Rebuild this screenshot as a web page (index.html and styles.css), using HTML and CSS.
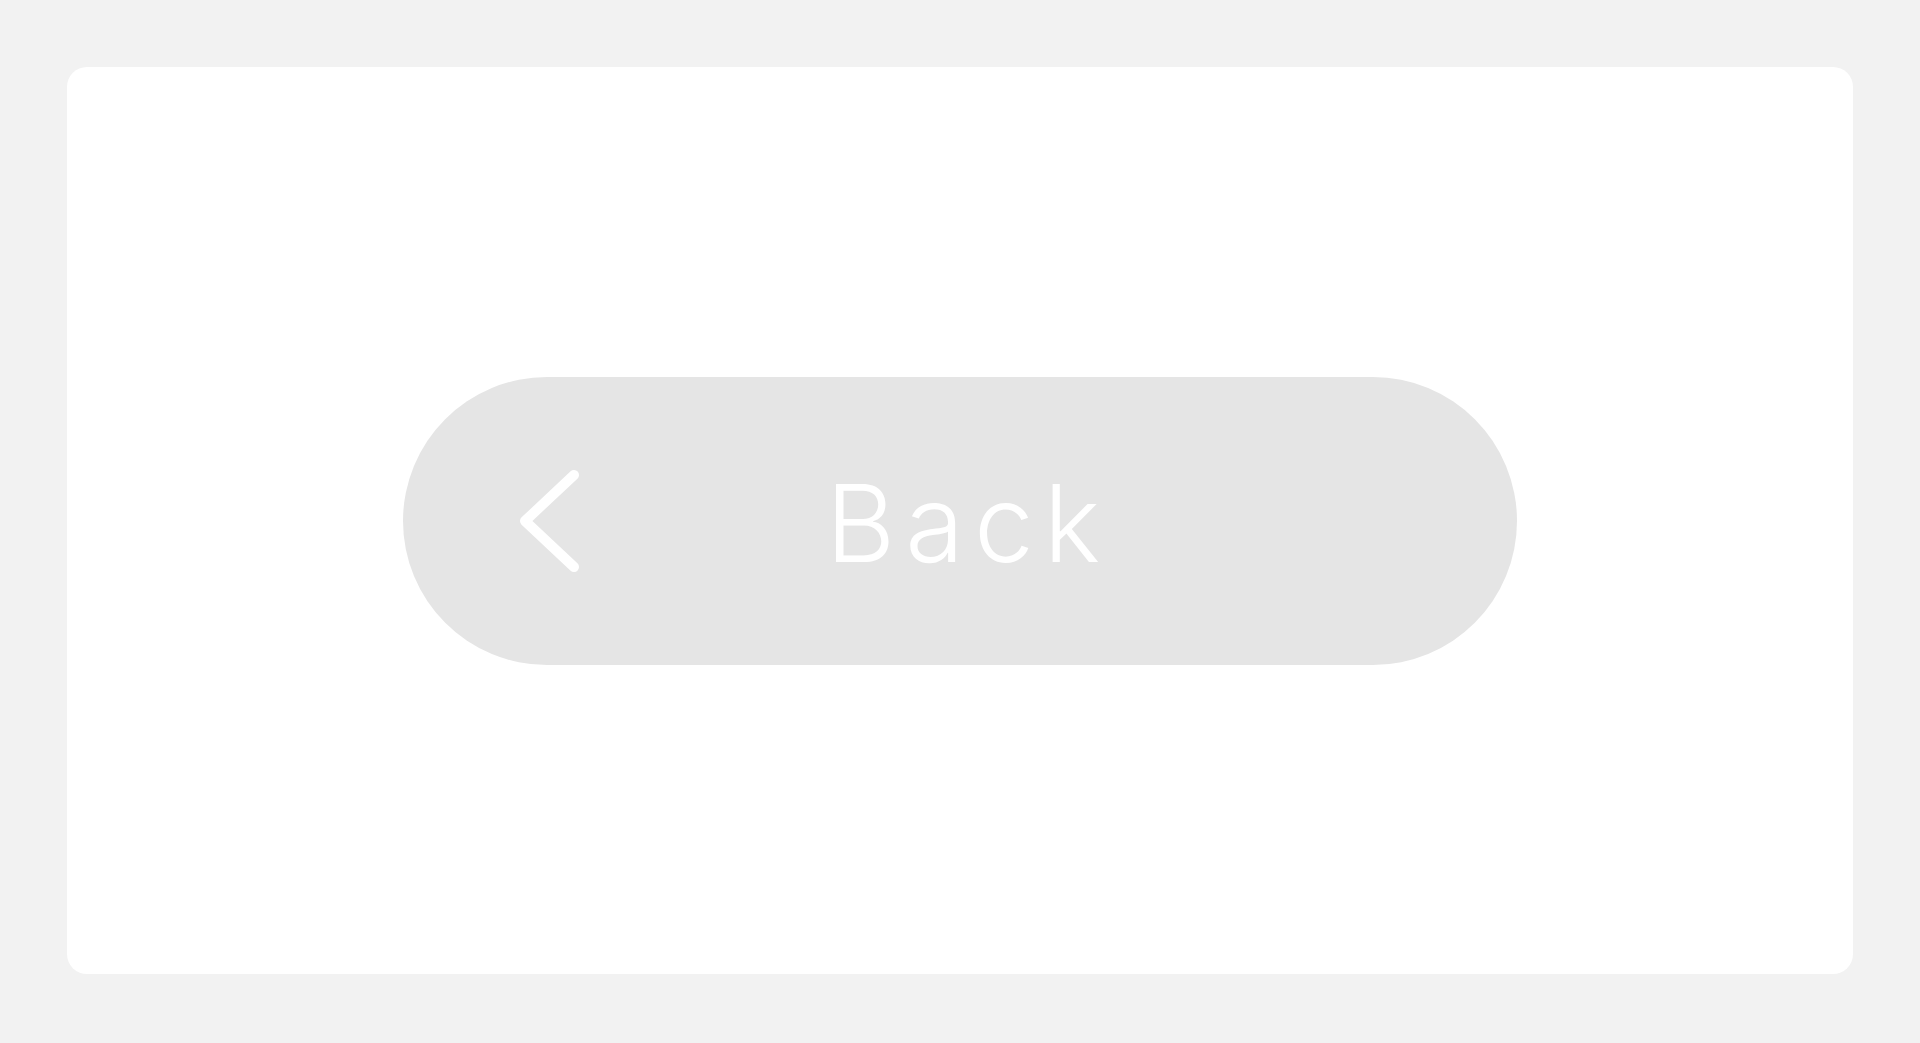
FILE: index.html
```html
<!DOCTYPE html>
<html lang="en">
<head>
  <meta charset="UTF-8">
  <meta name="viewport" content="width=device-width, initial-scale=1.0">
  <title>Back</title>
  <link rel="stylesheet" href="styles.css">
</head>
<body>
  <div class='card'>
    <!-- 返回按钮：左边箭头，中间文字 -->
    <div class='back'>
      <div class='arrow'>
        <svg width="59" height="102" viewBox="0 0 59 102">
          <polyline points="54,5 5,51 54,97" fill="none" stroke="#ffffff" stroke-width="10" stroke-linecap="round" stroke-linejoin="round"/>
        </svg>
      </div>
      <div class='label'>Back</div>
      <div></div>
    </div>
  </div>
</body>
</html>
```

FILE: styles.css
```css
*{
  box-sizing: border-box;
}
body{
  width:100%;
  height: 100vh;
  margin:0px;
  padding:67px 67px 69px;
  background-color:#f2f2f2;
  font-family: Inter, "Noto Sans", sans-serif;
}
.card{
  height:100%;
  background-color:#ffffff;
  border-radius:20px;
  display:grid;
  place-items:center;
}
.back{
  width:1114px;
  height:288px;
  border-radius:144px;
  background-color:#e5e5e5;
  display:grid;
  grid-template-columns: 1fr auto 1fr;
  align-items:center;
  cursor: pointer;
}
/* 箭头在左边，文字居中 */
.arrow{
  padding-left:117px;
  display:flex;
  align-items:center;
}
.label{
  color:#ffffff;
  font-size:107px;
  font-weight:300;
  line-height:1;
  letter-spacing:10px;
  padding-left:16px;
  padding-top:5px;
}
```
